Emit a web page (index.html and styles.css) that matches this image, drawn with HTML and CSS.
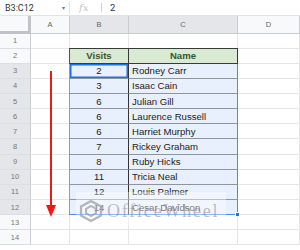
FILE: index.html
```html
<!DOCTYPE html>
<html>
<head>
<meta charset="utf-8">
<link rel="stylesheet" href="styles.css">
</head>
<body>
<div class="app">
  <div class="fbar">
    <div class="namebox"><span class="ref">B3:C12</span><span class="caret">▾</span></div>
    <div class="fx">fx</div>
    <div class="fsep"></div>
    <div class="fval">2</div>
  </div>
  <div class="sheet">
    <div class="corner"></div>
    <div class="colh">A</div>
    <div class="colh sel">B</div>
    <div class="colh sel">C</div>
    <div class="colh last">D</div>

    <div class="rowh">1</div><div class="c"></div><div class="c"></div><div class="c"></div><div class="c"></div>
    <div class="rowh">2</div><div class="c"></div><div class="c th th-b">Visits</div><div class="c th th-c">Name</div><div class="c"></div>

    <div class="rowh sel">3</div><div class="c"></div><div class="c td num active">2</div><div class="c td name">Rodney Carr</div><div class="c"></div>
    <div class="rowh sel">4</div><div class="c"></div><div class="c td num">3</div><div class="c td name">Isaac Cain</div><div class="c"></div>
    <div class="rowh sel">5</div><div class="c"></div><div class="c td num">6</div><div class="c td name">Julian Gill</div><div class="c"></div>
    <div class="rowh sel">6</div><div class="c"></div><div class="c td num">6</div><div class="c td name">Laurence Russell</div><div class="c"></div>
    <div class="rowh sel">7</div><div class="c"></div><div class="c td num">6</div><div class="c td name">Harriet Murphy</div><div class="c"></div>
    <div class="rowh sel">8</div><div class="c"></div><div class="c td num">7</div><div class="c td name">Rickey Graham</div><div class="c"></div>
    <div class="rowh sel">9</div><div class="c"></div><div class="c td num">8</div><div class="c td name">Ruby Hicks</div><div class="c"></div>
    <div class="rowh sel">10</div><div class="c"></div><div class="c td num">11</div><div class="c td name">Tricia Neal</div><div class="c"></div>
    <div class="rowh sel">11</div><div class="c"></div><div class="c td num">12</div><div class="c td name">Louis Palmer</div><div class="c"></div>
    <div class="rowh sel">12</div><div class="c"></div><div class="c td num lastrow">14</div><div class="c td name lastrow">Cesar Davidson</div><div class="c"></div>
    <div class="rowh">13</div><div class="c"></div><div class="c"></div><div class="c"></div><div class="c"></div>
    <div class="rowh">14</div><div class="c"></div><div class="c"></div><div class="c"></div><div class="c"></div>

    <div class="handle"></div>
    <svg class="arrow" width="12" height="150" viewBox="0 0 12 150">
      <line x1="6" y1="0" x2="6" y2="138" stroke="#f01818" stroke-width="2"/>
      <polygon points="1,134 11,134 6,146" fill="#f01818"/>
    </svg>
    <div class="wm">
      <svg class="wm-logo" width="26" height="24" viewBox="0 0 26 24">
        <path d="M13 2 L23 7.5 L23 16.5 L13 22 L3 16.5 L3 7.5 Z" fill="none" stroke="#9aa0a6" stroke-width="2.2"/>
        <path d="M13 7 L18 9.8 L18 14.2 L13 17 L8 14.2 L8 9.8 Z" fill="none" stroke="#9aa0a6" stroke-width="2"/>
      </svg>
      <span class="wm-text">OfficeWheel</span>
    </div>
  </div>
</div>
</body>
</html>
```
FILE: styles.css
```css
html, body {
  margin: 0;
  padding: 0;
  background: #fff;
}
body {
  font-family: "Liberation Sans", Arial, sans-serif;
  width: 300px;
  height: 250px;
  overflow: hidden;
}
.app {
  width: 300px;
}
.fbar {
  height: 15px;
  border-bottom: 1px solid #e1e3e6;
  display: flex;
  align-items: center;
  font-size: 9px;
  color: #333;
  font-family: Roboto, "Liberation Sans", sans-serif;
}
.namebox {
  width: 70px;
  height: 13px;
  border-right: 1px solid #e1e3e6;
  display: flex;
  align-items: center;
  justify-content: space-between;
  padding: 0 4px 0 5px;
  box-sizing: border-box;
}
.caret {
  font-size: 6px;
  color: #777;
}
.fx {
  margin-left: 9px;
  font-family: "DejaVu Serif", serif;
  font-style: italic;
  color: #c4c4c4;
  font-size: 10px;
  width: 22px;
}
.fsep {
  width: 1px;
  height: 9px;
  background: #d0d0d0;
}
.fval {
  margin-left: 8px;
  font-size: 9.5px;
}
.sheet {
  position: relative;
  display: grid;
  grid-template-columns: 31px 39px 59px 109px 62px;
  grid-template-rows: 17.5px repeat(14, 15.15px);
}
.sheet > div {
  box-sizing: border-box;
}
.corner {
  background: #f8f9fa;
  border-right: 3px solid #c0c3c7;
  border-bottom: 3px solid #c0c3c7;
}
.colh {
  background: #f8f9fa;
  border-right: 1px solid #c9ccd0;
  border-bottom: 1px solid #c9ccd0;
  font-size: 7.5px;
  color: #666;
  display: flex;
  align-items: center;
  justify-content: center;
  padding-top: 1px;
}
.colh.sel {
  background: #e4e6e9;
}
.rowh {
  background: #f8f9fa;
  border-right: 1px solid #c9ccd0;
  border-bottom: 1px solid #dcdee1;
  font-size: 7.5px;
  color: #777;
  display: flex;
  align-items: center;
  justify-content: center;
}
.rowh.sel {
  background: #e4e6e9;
}
.c {
  border-right: 1px solid #e6e6e6;
  border-bottom: 1px solid #e6e6e6;
  font-size: 9.6px;
  color: #222;
  display: flex;
  align-items: center;
  white-space: nowrap;
  overflow: hidden;
}
.th {
  background: #d9ead3;
  color: #38572a;
  font-weight: bold;
  justify-content: center;
  border-top: 1.5px solid #3a3a3a;
  border-bottom: 1.5px solid #3a3a3a;
  margin-top: -1px;
}
.th-b {
  border-left: 1.5px solid #555;
  border-right: 1px solid #3a3a3a;
  margin-left: -1px;
}
.th-c {
  border-right: 1.5px solid #3a3a3a;
}
.td {
  background: #e8f0fe;
  border-bottom: 1.5px solid #8e959d;
}
.td.num {
  justify-content: center;
  border-left: 1px solid #6fa0f4;
  border-right: 1px solid #333;
  margin-left: -1px;
}
.td.name {
  padding-left: 3px;
  border-right: 1.5px solid #4a8af4;
}
.td.lastrow {
  border-bottom: 1.5px solid #4a8af4;
}
.td.active {
  box-shadow: inset 0 0 0 1.5px #1a73e8;
}
.handle {
  position: absolute;
  left: 235px;
  top: 196px;
  width: 5px;
  height: 5px;
  background: #1a73e8;
  border: 1px solid #fff;
}
.arrow {
  position: absolute;
  left: 45px;
  top: 55px;
}
.wm {
  position: absolute;
  left: 76px;
  top: 176px;
  width: 150px;
  height: 34px;
  padding: 4px 0 0 2px;
  box-sizing: border-box;
  display: flex;
  align-items: center;
  gap: 3px;
  background: rgba(255, 255, 255, 0.4);
}
.wm-logo {
  opacity: 0.75;
}
.wm-text {
  font-family: "Liberation Serif", serif;
  font-size: 18px;
  color: rgba(120, 125, 130, 0.5);
  letter-spacing: 1.8px;
}
```
